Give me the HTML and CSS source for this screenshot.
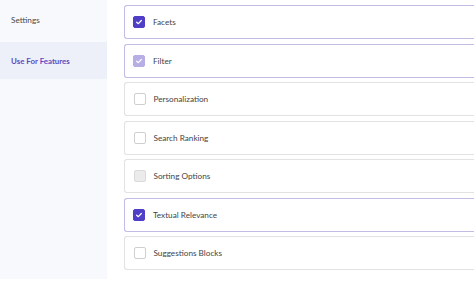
FILE: index.html
```html
<!DOCTYPE html>
<html lang="en">
<head>
    <meta charset="UTF-8">
    <meta name="viewport" content="width=device-width, initial-scale=1.0">
    <title>Use For Features</title>
    <link rel="stylesheet" href="styles.css">
</head>
<body>
    <div class="layout">
        <nav class="sidebar">
            <div class="nav-item">Settings</div>
            <div class="nav-item active">Use For Features</div>
        </nav>

        <main class="features">
            <label class="feature checked">
                <span class="box"><svg viewBox="0 0 12 12"><path d="M3.2 6.2 L5.2 8 L8.8 4.2"/></svg></span>
                <span class="name">Facets</span>
            </label>
            <label class="feature checked disabled">
                <span class="box"><svg viewBox="0 0 12 12"><path d="M3.2 6.2 L5.2 8 L8.8 4.2"/></svg></span>
                <span class="name">Filter</span>
            </label>
            <label class="feature">
                <span class="box"></span>
                <span class="name">Personalization</span>
            </label>
            <label class="feature">
                <span class="box"></span>
                <span class="name">Search Ranking</span>
            </label>
            <label class="feature disabled">
                <span class="box"></span>
                <span class="name">Sorting Options</span>
            </label>
            <label class="feature checked">
                <span class="box"><svg viewBox="0 0 12 12"><path d="M3.2 6.2 L5.2 8 L8.8 4.2"/></svg></span>
                <span class="name">Textual Relevance</span>
            </label>
            <label class="feature">
                <span class="box"></span>
                <span class="name">Suggestions Blocks</span>
            </label>
        </main>
    </div>
</body>
</html>
```

FILE: styles.css
```css
html, body {
    margin: 0;
    padding: 0;
    height: 100%;
    overflow: hidden;
    background-color: #fff;
}
body {
    font-family: Lato, "Open Sans", sans-serif;
    font-size: 8.2px;
    color: #444;
}
.layout {
    display: flex;
    height: 100%;
}
.sidebar {
    width: 107px;
    flex-shrink: 0;
    background-color: #f8f9fc;
    height: 279px;
}
.nav-item {
    height: 39px;
    display: flex;
    align-items: center;
    padding-left: 11px;
    color: #4a4a4a;
}
.nav-item.active {
    margin-top: 3px;
    height: 37px;
    background-color: #eef0f9;
    color: #5b4bbf;
    font-weight: bold;
    font-size: 7.9px;
}
.features {
    flex: 1;
    display: flex;
    flex-direction: column;
    gap: 4.5px;
    padding-top: 5px;
    padding-left: 16.5px;
}
.feature {
    height: 34px;
    box-sizing: border-box;
    border: 1px solid #e2e2e2;
    border-right: none;
    border-radius: 3px 0 0 3px;
    display: flex;
    align-items: center;
    padding-left: 9px;
    gap: 8px;
    background-color: #fff;
}
.feature.checked {
    border: 1.5px solid #c3bce4;
    border-right: none;
    padding-left: 8.5px;
}
.box {
    width: 12px;
    height: 12px;
    box-sizing: border-box;
    border: 1px solid #cfcfcf;
    border-radius: 2px;
    background-color: #fff;
    display: flex;
}
.disabled .box {
    background-color: #ebebeb;
    border-color: #dadada;
}
.checked .box {
    background-color: #4f3ec6;
    border-color: #4f3ec6;
}
.checked.disabled .box {
    background-color: #b7aee6;
    border-color: #b7aee6;
}
.box svg {
    width: 100%;
    height: 100%;
    fill: none;
    stroke: #fff;
    stroke-width: 1.5;
    stroke-linecap: round;
    stroke-linejoin: round;
}
```
